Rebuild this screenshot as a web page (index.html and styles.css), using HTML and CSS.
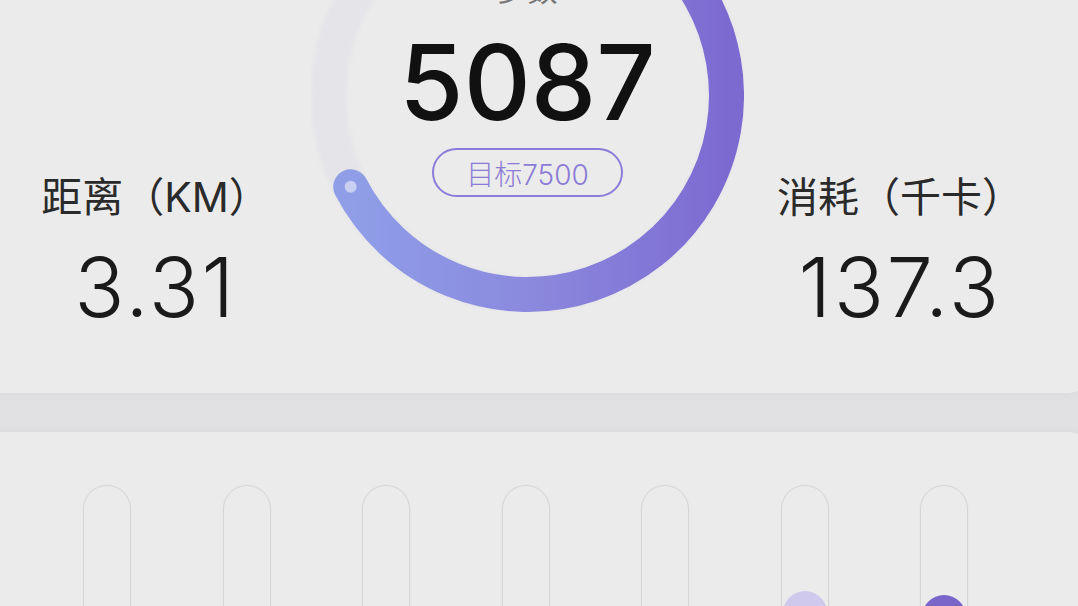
FILE: index.html
```html
<!DOCTYPE html>
<html lang="zh-CN">
<head>
<meta charset="utf-8">
<title>步数</title>
<link rel="stylesheet" href="styles.css">
</head>
<body>
<div class="page">
  <section class="card summary">
    <div class="stat">
      <div class="stat-label">距离（KM）</div>
      <div class="stat-value">3.31</div>
    </div>
    <div class="ring">
      <svg class="ring-svg" width="433" height="433" viewBox="0 0 433 433">
        <defs>
          <linearGradient id="arcGrad" x1="0" y1="0" x2="1" y2="0">
            <stop offset="0" stop-color="#8f9ee7"/>
            <stop offset="0.5" stop-color="#8a88dd"/>
            <stop offset="1" stop-color="#7d6ad1"/>
          </linearGradient>
          <filter id="soft" x="-10%" y="-10%" width="120%" height="120%">
            <feGaussianBlur stdDeviation="2"/>
          </filter>
        </defs>
        <circle cx="216.5" cy="216.5" r="199" fill="none" stroke="#e5e5e9" stroke-width="36" filter="url(#soft)"/>
        <path d="M39.7 307.8 A199 199 0 1 0 213 17.5" fill="none" stroke="url(#arcGrad)" stroke-width="35" stroke-linecap="round"/>
        <circle cx="39.7" cy="307.8" r="6" fill="#c9cff1"/>
      </svg>
      <div class="ring-text">
        <div class="ring-label">步数</div>
        <div class="ring-value">5087</div>
        <div class="goal">目标7500</div>
      </div>
    </div>
    <div class="stat">
      <div class="stat-label">消耗（千卡）</div>
      <div class="stat-value">137.3</div>
    </div>
  </section>
  <section class="card bars">
    <div class="track"><div class="fill"></div></div>
    <div class="track"><div class="fill"></div></div>
    <div class="track"><div class="fill"></div></div>
    <div class="track"><div class="fill"></div></div>
    <div class="track"><div class="fill"></div></div>
    <div class="track"><div class="fill fill-light" style="height:112px"></div></div>
    <div class="track"><div class="fill fill-dark" style="height:108px"></div></div>
  </section>
</div>
</body>
</html>
```
FILE: styles.css
```css
html, body {
  margin: 0;
  height: 100%;
  overflow: hidden;
  background: #e1e1e3;
}
body {
  font-family: Inter, "Noto Sans CJK SC", sans-serif;
}
.page {
  width: 1078px;
}
.card {
  background: #ebebeb;
}
.summary {
  margin: -121px -14px 0 -40px;
  padding: 0 14px 0 40px;
  height: 514px;
  box-sizing: border-box;
  border-radius: 0 0 24px 24px;
  display: grid;
  grid-template-columns: 311px 433px 312px;
  align-items: start;
  box-shadow: 0 3px 8px rgba(0, 0, 0, 0.025);
}
.stat {
  display: flex;
  flex-direction: column;
  align-items: center;
  padding-top: 292px;
}
.stat-label {
  font-size: 41px;
  line-height: 52px;
  color: #2a2a2a;
}
.stat-value {
  font-size: 83px;
  line-height: 1;
  font-weight: 300;
  letter-spacing: 2.5px;
  margin-top: 23px;
  color: #1a1a1a;
}
.ring {
  display: grid;
  width: 433px;
  height: 433px;
}
.ring > * {
  grid-area: 1 / 1;
}
.ring-text {
  display: flex;
  flex-direction: column;
  align-items: center;
  padding-top: 91px;
}
.ring-label {
  font-size: 30px;
  line-height: 40px;
  color: #777;
}
.ring-value {
  font-size: 104px;
  line-height: 1;
  font-weight: 500;
  margin-top: 20px;
  color: #111;
}
.goal {
  margin-top: 14px;
  box-sizing: border-box;
  width: 191px;
  height: 49px;
  border: 2.5px solid #8c7cda;
  border-radius: 25px;
  display: flex;
  align-items: center;
  justify-content: center;
  font-size: 28px;
  font-weight: 300;
  color: #8b7bd6;
}
.bars {
  margin: 39px -14px 0 -40px;
  padding: 53px 14px 0 123px;
  height: 300px;
  border-radius: 0 24px 0 0;
  display: flex;
  gap: 91.5px;
  box-shadow: 0 -3px 8px rgba(0, 0, 0, 0.025);
}
.track {
  flex: none;
  box-sizing: border-box;
  width: 48px;
  height: 220px;
  padding: 1px;
  border: 1.5px solid #d6d6d6;
  border-radius: 24px;
  display: flex;
  flex-direction: column;
  justify-content: flex-end;
  box-shadow: 0 0 2px rgba(0, 0, 0, 0.05);
}
.fill {
  width: 100%;
  border-radius: 22px;
}
.fill-light {
  background: #d0c9ee;
}
.fill-dark {
  background: #7a66c9;
}
```
